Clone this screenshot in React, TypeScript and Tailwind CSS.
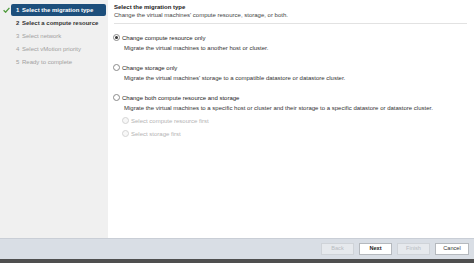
import React from 'react';

const STEPS = [
  { n: 1, label: 'Select the migration type', state: 'active' },
  { n: 2, label: 'Select a compute resource', state: 'next' },
  { n: 3, label: 'Select network', state: 'pending' },
  { n: 4, label: 'Select vMotion priority', state: 'pending' },
  { n: 5, label: 'Ready to complete', state: 'pending' },
];

function Radio({ checked = false, disabled = false }: { checked?: boolean; disabled?: boolean }) {
  return (
    <span
      className={`flex h-[7px] w-[7px] shrink-0 items-center justify-center rounded-full border ${
        disabled ? 'border-[#d4d4d4] bg-[#f7f7f7]' : 'border-[#8a8a8a] bg-white'
      }`}
    >
      {checked && <span className="h-[3px] w-[3px] rounded-full bg-[#333]" />}
    </span>
  );
}

function Option({ title, desc, checked }: { title: string; desc: string; checked?: boolean }) {
  return (
    <div>
      <div className="flex items-center gap-[2px] text-[#222]">
        <Radio checked={checked} />
        <span>{title}</span>
      </div>
      <div className="pl-[11px] pt-[4px] text-[#333]">{desc}</div>
    </div>
  );
}

export default function App() {
  return (
    <div className="flex h-[263px] w-[474px] flex-col bg-white text-[6px] leading-none" style={{ fontFamily: '"Liberation Sans", Arial, sans-serif' }}>
      <div className="flex min-h-0 flex-1">
        {/* wizard steps */}
        <div className="flex w-[108px] flex-col gap-[1px] bg-[#f0f0f0] pl-[2px] pr-[2px] pt-[4px]">
          {STEPS.map(s => (
            <div key={s.n} className="flex items-center">
              <span className="flex w-[9px] justify-center">
                {s.state === 'active' && (
                  <svg width="7" height="6" viewBox="0 0 7 6" fill="none">
                    <path d="M0.6 3.2L2.6 5.2L6.4 0.8" stroke="#4e9a3a" strokeWidth="1.3" />
                  </svg>
                )}
              </span>
              <div
                className={`flex h-[12px] flex-1 items-center rounded-[2px] pl-[5px] ${
                  s.state === 'active'
                    ? 'bg-[#1d4f7c] font-bold text-white'
                    : s.state === 'next'
                    ? 'font-bold text-[#333]'
                    : 'text-[#a0a0a0]'
                }`}
              >
                <span className="w-[6px]">{s.n}</span>
                <span>{s.label}</span>
              </div>
            </div>
          ))}
        </div>

        {/* content */}
        <div className="flex flex-1 flex-col pl-[6px] pr-[7px] pt-[4px]">
          <div className="font-bold text-[#222]">Select the migration type</div>
          <div className="pt-[2px] text-[#444]">Change the virtual machines' compute resource, storage, or both.</div>
          <div className="mt-[5px] h-px bg-[#e2e2e2]" />

          <div className="-ml-[1px] flex flex-col gap-[13px] pt-[10px]">
            <Option checked title="Change compute resource only" desc="Migrate the virtual machines to another host or cluster." />
            <Option title="Change storage only" desc="Migrate the virtual machines' storage to a compatible datastore or datastore cluster." />
            <div>
              <Option
                title="Change both compute resource and storage"
                desc="Migrate the virtual machines to a specific host or cluster and their storage to a specific datastore or datastore cluster."
              />
              <div className="flex flex-col gap-[6px] pl-[9px] pt-[6px] text-[#b4b4b4]">
                <div className="flex items-center gap-[2px]">
                  <Radio disabled />
                  <span>Select compute resource first</span>
                </div>
                <div className="flex items-center gap-[2px]">
                  <Radio disabled />
                  <span>Select storage first</span>
                </div>
              </div>
            </div>
          </div>
        </div>
      </div>

      {/* footer */}
      <div className="flex h-[21px] items-center justify-end gap-[5px] border-t border-[#c9ced6] bg-[#d9dee5] pr-[5px]">
        <button className="h-[12px] w-[33px] border border-[#cfd3d8] bg-[#e6e9ed] text-[5.6px] text-[#b8bcc2]">Back</button>
        <button className="h-[12px] w-[33px] border border-[#b5b9be] bg-white text-[5.6px] font-bold text-[#222]">Next</button>
        <button className="h-[12px] w-[33px] border border-[#cfd3d8] bg-[#e6e9ed] text-[5.6px] text-[#b8bcc2]">Finish</button>
        <button className="h-[12px] w-[34px] border border-[#b5b9be] bg-white text-[5.6px] text-[#333]">Cancel</button>
      </div>
      <div className="h-[4px] bg-[#4f4f4f]" />
    </div>
  );
}
